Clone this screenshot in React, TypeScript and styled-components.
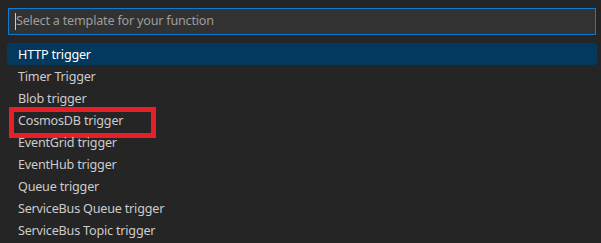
import React from "react";
import styled, { createGlobalStyle } from "styled-components";

const Global = createGlobalStyle`
  html, body { margin: 0; padding: 0; background: #252526; }
  body { font-family: "Noto Sans", "Open Sans", sans-serif; }
`;

const Panel = styled.div`
  width: 601px;
  height: 243px;
  background: #252526;
  box-sizing: border-box;
  padding: 8px 5px 0 8px;
  display: flex;
  flex-direction: column;
  gap: 8px;
  overflow: hidden;
`;

const InputBox = styled.div`
  height: 27px;
  box-sizing: border-box;
  border: 1px solid #0e7ad3;
  background: #323232;
  display: flex;
  align-items: center;
  padding-left: 6px;
  position: relative;
`;

const Caret = styled.span`
  width: 1px;
  height: 17px;
  background: #cccccc;
`;

const Placeholder = styled.span`
  color: #9d9d9d;
  font-size: 12.6px;
  letter-spacing: -0.2px;
  line-height: 1;
`;

const List = styled.div`
  display: flex;
  flex-direction: column;
  margin-left: -1px;
  margin-right: -1px;
`;

const Row = styled.div<{ $selected?: boolean }>`
  position: relative;
  height: 22px;
  display: flex;
  align-items: center;
  padding-left: 11px;
  border-radius: 3px;
  font-size: 12.6px;
  letter-spacing: -0.2px;
  color: ${(p) => (p.$selected ? "#ffffff" : "#cccccc")};
  background: ${(p) => (p.$selected ? "#04395e" : "transparent")};
`;

const Callout = styled.span`
  position: absolute;
  left: 2px;
  top: -2px;
  width: 147px;
  height: 31px;
  box-sizing: border-box;
  border: 5px solid #e81f27;
  pointer-events: none;
`;

const items = [
  "HTTP trigger",
  "Timer Trigger",
  "Blob trigger",
  "CosmosDB trigger",
  "EventGrid trigger",
  "EventHub trigger",
  "Queue trigger",
  "ServiceBus Queue trigger",
  "ServiceBus Topic trigger",
];

export default function App() {
  return (
    <>
      <Global />
      <Panel>
        <InputBox>
          <Caret />
          <Placeholder>Select a template for your function</Placeholder>
        </InputBox>
        <List>
          {items.map((it, i) => (
            <Row key={it} $selected={i === 0}>
              {it}
              {it === "CosmosDB trigger" && <Callout />}
            </Row>
          ))}
        </List>
      </Panel>
    </>
  );
}
